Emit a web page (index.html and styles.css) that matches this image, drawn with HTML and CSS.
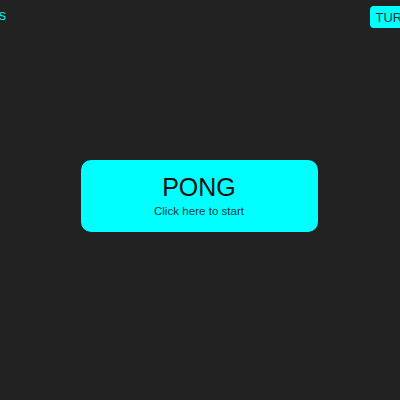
FILE: index.html
```html
<!DOCTYPE html>
<html lang="en">
<head>
    <meta charset="UTF-8">
    <meta name="viewport" content="width=device-width, initial-scale=1.0">
    <title>Pong</title>
    <link rel="stylesheet" href="styles.css">
</head>
<body>
    <div class="topbar">
        <span class="scores">HIGH SCORES</span>
        <button class="turbo">TURBO</button>
    </div>

    <div class="stage">
        <div class="start" id="start">
            <h1>PONG</h1>
            <p>Click here to start</p>
        </div>
    </div>
</body>
</html>
```

FILE: styles.css
```css
body {
    font-family: "Liberation Sans", Arial, sans-serif;
    margin: 0;
    padding: 0;
    background: #222222;
    color: #00ffff;
    overflow: hidden;
}

.topbar {
    position: absolute;
    top: 0;
    left: 0;
    right: 0;
    display: flex;
    justify-content: space-between;
    align-items: center;
    padding-top: 6px;
}

.scores {
    font-size: 11px;
    margin-left: -71px;
    margin-top: -2px;
    white-space: nowrap;
}

.turbo {
    background: #00ffff;
    border: none;
    border-radius: 4px;
    color: #1a3a3a;
    font-family: "Liberation Sans", Arial, sans-serif;
    font-size: 13px;
    height: 22px;
    padding: 0 6px;
    margin-right: -27px;
    cursor: pointer;
}

.stage {
    height: 100vh;
    display: flex;
    justify-content: center;
    align-items: center;
    padding-bottom: 8px;
    padding-right: 2px;
    box-sizing: border-box;
}

.start {
    background: #00ffff;
    color: #111;
    border-radius: 10px;
    width: 237px;
    height: 72px;
    text-align: center;
    cursor: pointer;
}

.start h1 {
    font-size: 25px;
    font-weight: normal;
    margin: 13px 0 0;
    line-height: 28px;
}

.start p {
    font-size: 11.6px;
    color: #1b3b3b;
    margin: 3px 0 0;
}
```
